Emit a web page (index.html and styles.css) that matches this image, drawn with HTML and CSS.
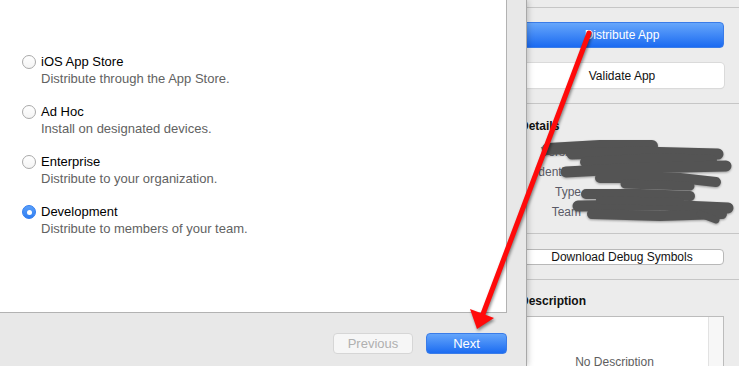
FILE: index.html
```html
<!DOCTYPE html>
<html>
<head>
<meta charset="utf-8">
<link rel="stylesheet" href="styles.css">
</head>
<body>
<div class="window">
  <div class="main"></div>
  <aside class="inspector">
    <div class="insp-head"></div>
    <div class="sec actions">
      <div class="btn btn-primary">Distribute App</div>
      <div class="btn btn-white">Validate App</div>
    </div>
    <div class="sec details">
      <div class="heading">Details</div>
      <div class="rows">
        <div class="lbl">Version</div><div class="val"></div>
        <div class="lbl">Identifier</div><div class="val"></div>
        <div class="lbl">Type</div><div class="val"></div>
        <div class="lbl">Team</div><div class="val"></div>
      </div>
    </div>
    <div class="sec debug">
      <div class="btn btn-small">Download Debug Symbols</div>
    </div>
    <div class="sec desc">
      <div class="heading">Description</div>
      <div class="desc-box">
        <div class="desc-text">No Description</div>
        <div class="scroller"></div>
      </div>
    </div>
  </aside>

  <div class="sheet">
    <div class="sheet-content">
      <div class="option">
        <span class="radio"></span>
        <div class="opt-text">
          <div class="opt-title">iOS App Store</div>
          <div class="opt-desc">Distribute through the App Store.</div>
        </div>
      </div>
      <div class="option">
        <span class="radio"></span>
        <div class="opt-text">
          <div class="opt-title">Ad Hoc</div>
          <div class="opt-desc">Install on designated devices.</div>
        </div>
      </div>
      <div class="option">
        <span class="radio"></span>
        <div class="opt-text">
          <div class="opt-title">Enterprise</div>
          <div class="opt-desc">Distribute to your organization.</div>
        </div>
      </div>
      <div class="option">
        <span class="radio radio-on"></span>
        <div class="opt-text">
          <div class="opt-title">Development</div>
          <div class="opt-desc">Distribute to members of your team.</div>
        </div>
      </div>
    </div>
    <div class="sheet-footer">
      <div class="sbtn sbtn-disabled">Previous</div>
      <div class="sbtn sbtn-primary">Next</div>
    </div>
  </div>

  <svg class="overlay" width="739" height="366" viewBox="0 0 739 366">
    <g class="scribble" fill="none" stroke="#545454" stroke-linecap="round" stroke-linejoin="round">
      <path d="M548 149 L600 146 L652 146" stroke-width="12"/>
      <path d="M572 154 L640 152 L718 154" stroke-width="11"/>
      <path d="M585 162 L660 158 L712 160" stroke-width="10"/>
      <path d="M566 172 L640 168 L726 166" stroke-width="11"/>
      <path d="M600 178 L680 178 L716 182" stroke-width="10"/>
      <path d="M625 184 L690 186" stroke-width="9"/>
      <path d="M586 194 L640 194 L690 196" stroke-width="10"/>
      <path d="M578 206 L660 205 L728 208" stroke-width="11"/>
      <path d="M592 214 L660 216 L722 214" stroke-width="10"/>
      <path d="M700 214 L716 220" stroke-width="7"/>
      <path d="M600 200 L680 202" stroke-width="8"/>
    </g>
    <g class="arrow">
      <line x1="589" y1="33" x2="483" y2="314" stroke="#ff0a0a" stroke-width="5" stroke-linecap="round"/>
      <polygon points="477,329 470,309 494,318" fill="#ff0a0a"/>
    </g>
  </svg>
</div>
</body>
</html>
```

FILE: styles.css
```css
* {
  box-sizing: border-box;
  margin: 0;
  padding: 0;
}

body {
  margin: 0;
  width: 739px;
  height: 366px;
  overflow: hidden;
  background: #ececec;
  font-family: "Liberation Sans", Arial, sans-serif;
}

.window {
  position: relative;
  width: 739px;
  height: 366px;
  display: flex;
  overflow: hidden;
}

.main {
  flex: 1;
}

/* Inspector (behind the sheet) */
.inspector {
  width: 229px;
  flex: none;
  background: #ececec;
  display: flex;
  flex-direction: column;
}

.insp-head {
  flex: none;
  height: 8px;
  border-bottom: 1px solid #c6c6c6;
}

.sec {
  flex: none;
  padding: 0 15px 0 10px;
  border-bottom: 1px solid #c6c6c6;
}

.actions {
  padding-top: 14px;
  padding-bottom: 15px;
  display: flex;
  flex-direction: column;
  gap: 15px;
}

.btn {
  display: flex;
  align-items: center;
  justify-content: center;
  font-size: 12px;
  border-radius: 4px;
  color: #111;
}

.btn-primary {
  height: 26px;
  color: #fff;
  background: linear-gradient(#66a6fb, #1b6af1);
  border: 1px solid #3a7ce8;
}

.btn-white {
  height: 25px;
  background: #fff;
  box-shadow: 0 0 0 1px #dadada, 0 1px 1px rgba(0, 0, 0, 0.12);
}

.details {
  padding-top: 14px;
  padding-bottom: 11px;
}

.heading {
  font-size: 12px;
  font-weight: bold;
  line-height: 16px;
  color: #111;
}

.rows {
  margin-top: 8px;
  display: grid;
  grid-template-columns: 61px 1fr;
  column-gap: 6px;
  grid-auto-rows: 20px;
  align-items: center;
  font-size: 12px;
}

.lbl {
  text-align: right;
  color: #5a5a66;
}

.val {
  color: #333;
  white-space: nowrap;
}

.debug {
  padding-top: 15px;
  padding-bottom: 14px;
}

.btn-small {
  height: 16px;
  background: #fff;
  border: 1px solid #b8b8b8;
  border-radius: 4px;
}

.desc {
  padding-top: 13px;
  border-bottom: none;
}

.desc-box {
  margin-top: 7px;
  height: 100px;
  display: flex;
  background: #fff;
  border: 1px solid #bcbcbc;
}

.desc-text {
  flex: 1;
  text-align: center;
  font-size: 12px;
  line-height: 16px;
  padding-top: 37px;
  color: #5e5e5e;
}

.scroller {
  width: 15px;
  background: #f7f7f7;
  border-left: 1px solid #e2e2e2;
}

/* Sheet */
.sheet {
  position: absolute;
  left: 0;
  top: 0;
  width: 527px;
  height: 366px;
  background: #e8e8e8;
  border-right: 1px solid #a8a8a8;
  box-shadow: 1px 0 6px rgba(0, 0, 0, 0.22);
  display: flex;
  flex-direction: column;
}

.sheet-content {
  flex: none;
  width: 507px;
  height: 313px;
  background: #fff;
  border-right: 1px solid #b2b2b2;
  border-bottom: 1px solid #b2b2b2;
  padding: 53px 0 0 22px;
  display: flex;
  flex-direction: column;
  gap: 16px;
}

.option {
  display: flex;
  align-items: flex-start;
}

.radio {
  width: 14px;
  height: 14px;
  margin-top: 2px;
  margin-right: 5px;
  border-radius: 50%;
  border: 1px solid #a9a9a9;
  background: linear-gradient(#fff, #f4f4f4);
  display: flex;
  align-items: center;
  justify-content: center;
  flex: none;
}

.radio-on {
  border-color: #2f7cf0;
  background: linear-gradient(#5ba0fa, #2f7ef2);
}

.radio-on::after {
  content: "";
  width: 5px;
  height: 5px;
  border-radius: 50%;
  background: #fff;
}

.opt-text {
  font-size: 13px;
  line-height: 17px;
}

.opt-title {
  color: #000;
}

.opt-desc {
  color: #626262;
}

.sheet-footer {
  flex: 1;
  display: flex;
  justify-content: flex-end;
  align-items: flex-start;
  gap: 13px;
  padding: 20px 19px 0 0;
}

.sbtn {
  height: 21px;
  display: flex;
  align-items: center;
  justify-content: center;
  font-size: 13px;
  border-radius: 4px;
}

.sbtn-disabled {
  width: 80px;
  background: #f6f6f6;
  border: 1px solid #d6d6d6;
  color: #b0b0b0;
}

.sbtn-primary {
  width: 81px;
  color: #fff;
  background: linear-gradient(#64a5fb, #1c6cf1);
  border: 1px solid #3a7ce8;
}

/* Annotation overlay */
.overlay {
  position: absolute;
  left: 0;
  top: 0;
  pointer-events: none;
}

.scribble {
  filter: drop-shadow(0 1px 1px rgba(0, 0, 0, 0.35));
}

.arrow {
  filter: drop-shadow(1px 2px 1.5px rgba(0, 0, 0, 0.45));
}
```
